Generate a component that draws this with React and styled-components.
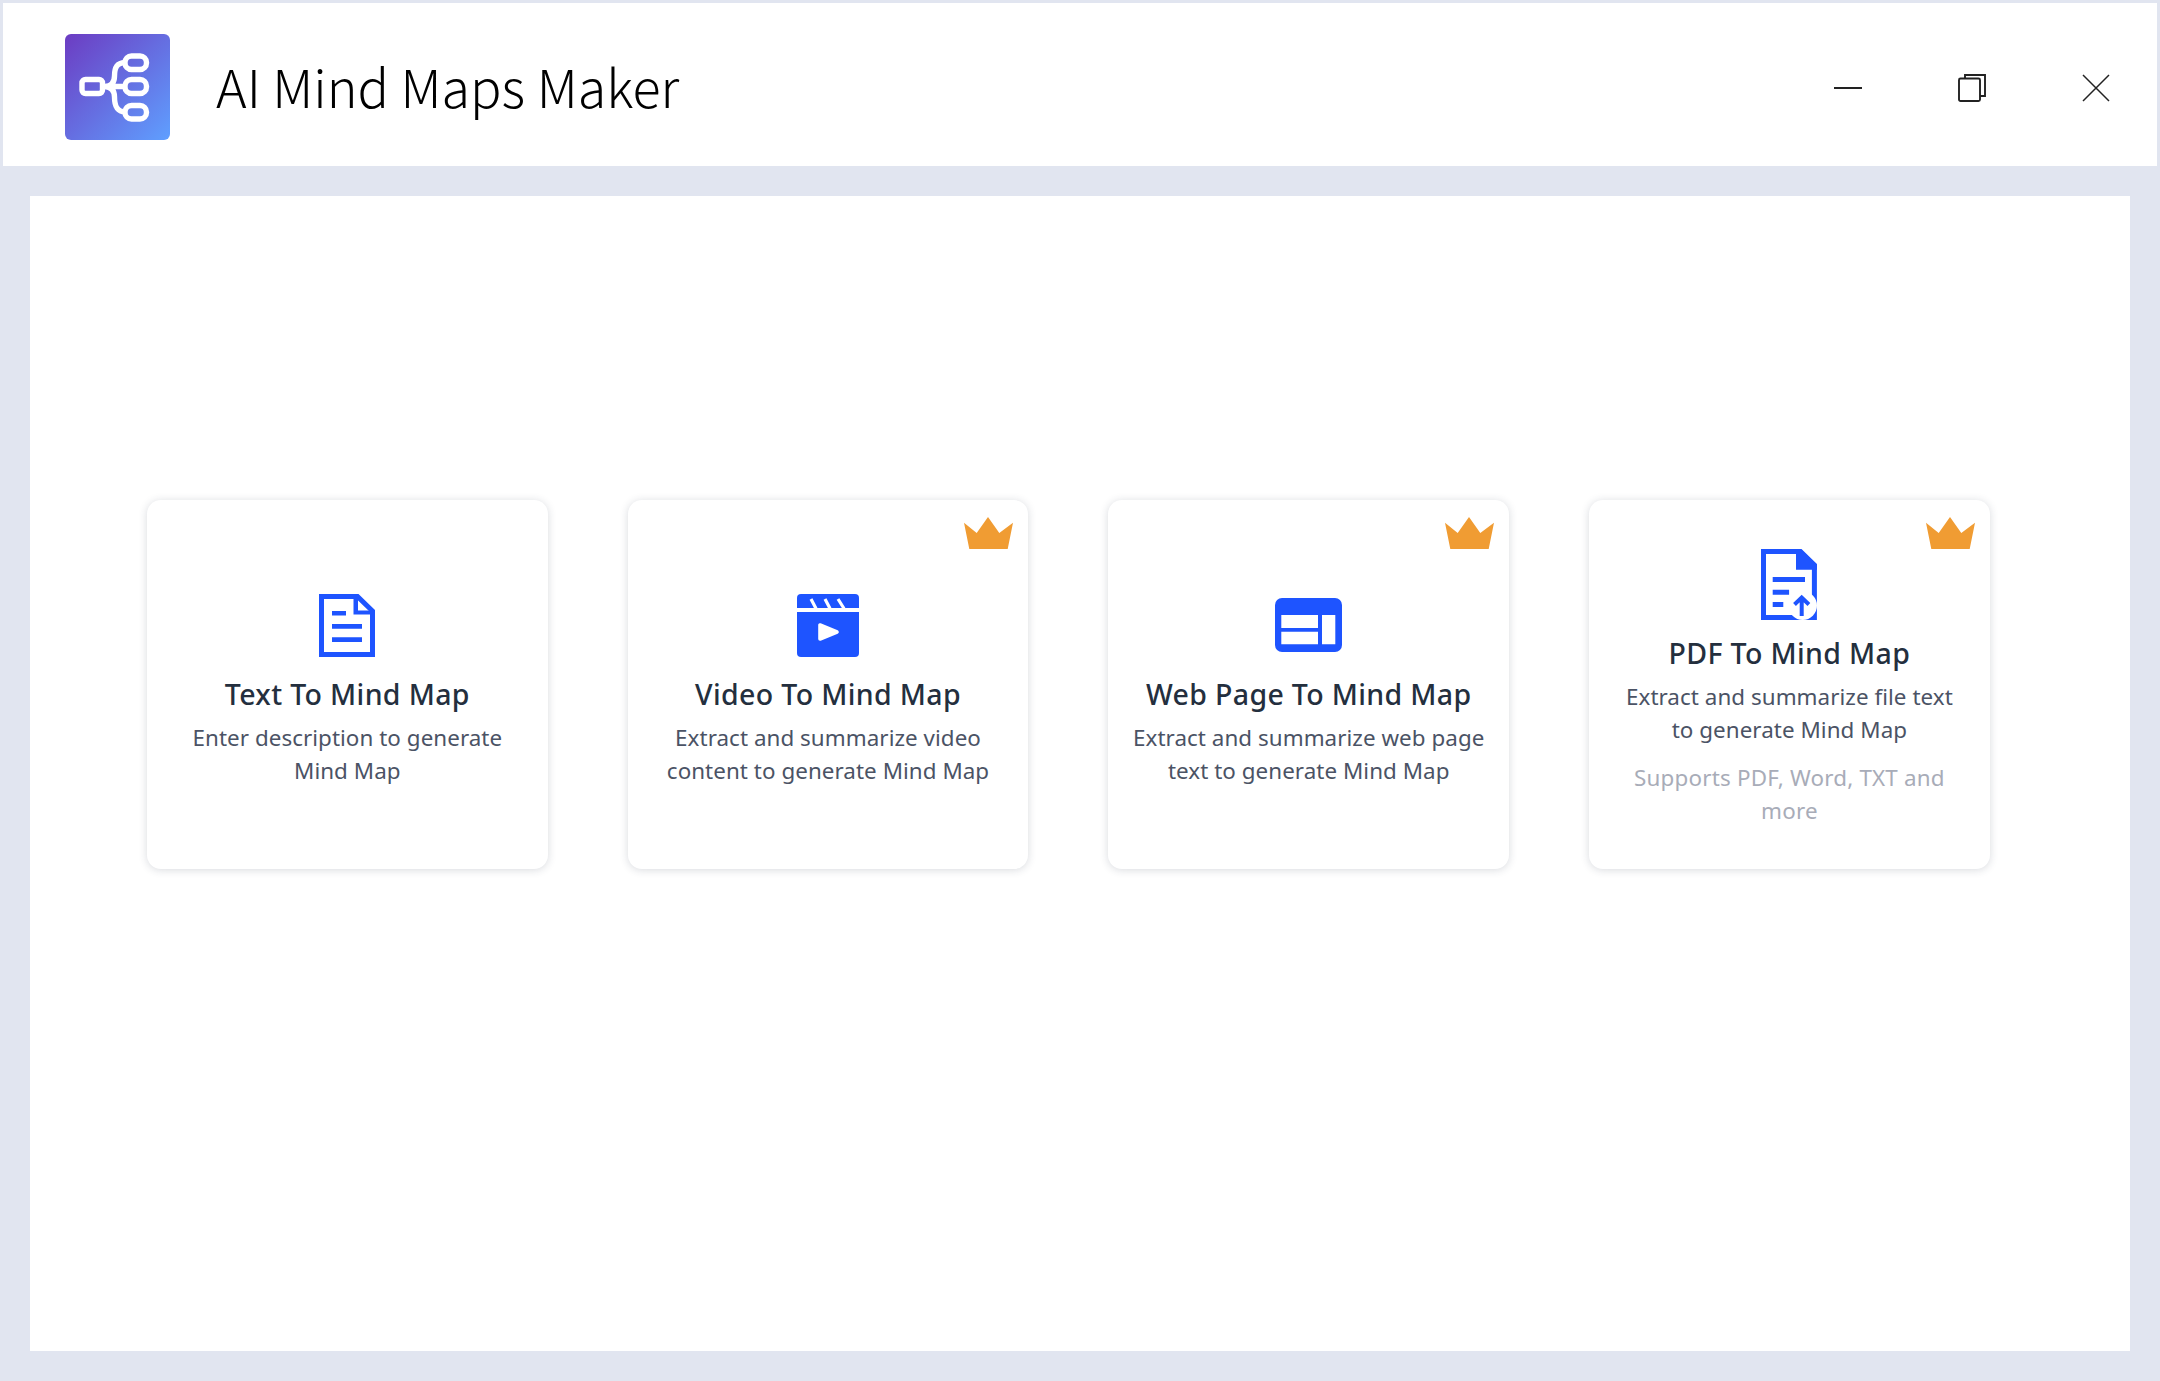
import React from "react";
import styled, { createGlobalStyle } from "styled-components";

const Global = createGlobalStyle`
  html, body { margin: 0; padding: 0; background: #e1e5f0; }
  #root { width: 2160px; height: 1381px; }
  * { box-sizing: border-box; }
`;

const Page = styled.div`
  width: 2160px;
  height: 1381px;
  padding: 3px 3px 30px;
  display: flex;
  flex-direction: column;
  background: #e1e5f0;
`;

const TitleBar = styled.header`
  height: 163px;
  flex: none;
  background: #fff;
  display: flex;
  align-items: center;
  padding: 5px 47px 0 62px;
`;

const Logo = styled.svg`
  width: 105px;
  height: 106px;
  display: block;
  flex: none;
`;

const AppName = styled.h1`
  margin: 0 0 1px 46px;
  font-family: "Noto Sans CJK SC", "Noto Sans", sans-serif;
  font-weight: 300;
  font-size: 52.1px;
  line-height: 1;
  color: #000;
  flex: 1;
`;

const Controls = styled.div`
  display: flex;
  align-items: center;
  gap: 96px;
  margin-top: 2px;
`;

const WinIcon = styled.svg`
  width: 28px;
  height: 28px;
  display: block;
  fill: none;
  stroke: #222;
`;

const Main = styled.main`
  flex: 1;
  margin: 30px 27px 0;
  background: #fff;
  padding: 304px 140px 0 117px;
`;

const CardRow = styled.div`
  display: grid;
  grid-template-columns: repeat(4, 400.7px);
  gap: 80px;
`;

const Card = styled.section`
  position: relative;
  height: 369px;
  background: #fff;
  border-radius: 14px;
  box-shadow: 0 1px 8px rgba(40, 50, 70, 0.18);
  display: flex;
  flex-direction: column;
  align-items: center;
  justify-content: center;
  text-align: center;
`;

const Crown = styled.svg`
  position: absolute;
  top: 17px;
  right: 15px;
  width: 49px;
  height: 32px;
  fill: #f09c33;
`;

const IconBox = styled.div`
  height: 85px;
  margin-bottom: 7px;
  display: flex;
  align-items: center;
  justify-content: center;
`;

const CardIcon = styled.svg`
  display: block;
  overflow: visible;
`;

const CardTitle = styled.h2`
  margin: 0;
  font-family: "Noto Sans", sans-serif;
  font-weight: 500;
  font-size: 28.5px;
  letter-spacing: 0.35px;
  line-height: 38px;
  color: #242f3e;
  white-space: nowrap;
`;

const CardText = styled.p`
  margin: ${(p) => (p.$muted ? "15px" : "8px")} 0 0;
  font-family: "Noto Sans", sans-serif;
  font-weight: 400;
  font-size: 22.4px;
  letter-spacing: ${(p) => (p.$muted ? "0.2px" : "0.05px")};
  line-height: 33px;
  color: ${(p) => (p.$muted ? "#a8acb8" : "#4b5365")};
  white-space: pre;
`;

const BLUE = "#1e54ff";

const DocIcon = () => (
  <CardIcon width="56" height="63" viewBox="0 0 56 63">
    <path d="M2.5 2.5H38.5L53.5 17V60.5H2.5Z" fill="none" stroke={BLUE} strokeWidth="5" />
    <path d="M34.5 1V20.5H55V16.5H39V1Z" fill={BLUE} />
    <path d="M13 17h14v4.6H13zM13 30h30v4.8H13zM13 43.3h30v4.8H13z" fill={BLUE} />
  </CardIcon>
);

const VideoIcon = () => (
  <CardIcon width="62" height="63" viewBox="0 0 62 63">
    <path d="M4 0H58A4 4 0 0 1 62 4V14H0V4A4 4 0 0 1 4 0Z" fill={BLUE} />
    <path d="M0 18H62V59A4 4 0 0 1 58 63H4A4 4 0 0 1 0 59Z" fill={BLUE} />
    <path d="M14 5L19 14.5M28 5L33 14.5M41 5L47 14.5" stroke="#fff" strokeWidth="3.2" fill="none" />
    <path d="M23 31V45L40 38Z" fill="#fff" stroke="#fff" strokeWidth="3.6" strokeLinejoin="round" />
  </CardIcon>
);

const WebIcon = () => (
  <CardIcon width="67" height="54" viewBox="0 0 67 54">
    <rect width="67" height="54" rx="7" fill={BLUE} />
    <path d="M6.3 17H43V30H6.3zM6.3 33.7H43V46.3H6.3zM47 17H60.3V46.3H47z" fill="#fff" />
  </CardIcon>
);

const PdfIcon = () => (
  <CardIcon width="56" height="71" viewBox="0 0 56 71">
    <path d="M2.5 2.5H39.5L53.4 16V68.5H2.5Z" fill="none" stroke={BLUE} strokeWidth="5" />
    <path d="M35 1H40.5L56 15.5V20.8H35Z" fill={BLUE} />
    <path d="M11.7 28h32.3v5H11.7zM11.7 40.7h16.4v5H11.7zM11.7 53h10.6v5H11.7z" fill={BLUE} />
    <circle cx="41.7" cy="56.6" r="14.3" fill="#fff" />
    <path d="M40.7 67V50M33.5 55.5L40.7 48.6L47.9 55.5" fill="none" stroke={BLUE} strokeWidth="4" />
  </CardIcon>
);

const cards = [
  { key: "text", Icon: DocIcon, title: "Text To Mind Map", text: "Enter description to generate\nMind Map" },
  { key: "video", Icon: VideoIcon, crown: true, title: "Video To Mind Map", text: "Extract and summarize video\ncontent to generate Mind Map" },
  { key: "web", Icon: WebIcon, crown: true, title: "Web Page To Mind Map", text: "Extract and summarize web page\ntext to generate Mind Map" },
  { key: "pdf", Icon: PdfIcon, crown: true, title: "PDF To Mind Map", text: "Extract and summarize file text\nto generate Mind Map", note: "Supports PDF, Word, TXT and\nmore" },
];

export default function App() {
  return (
    <Page>
      <Global />
      <TitleBar>
        <Logo viewBox="0 0 105 106">
          <defs>
            <linearGradient id="logoFill" x1="0" y1="0" x2="1" y2="1">
              <stop offset="0" stopColor="#6c3cc2" />
              <stop offset="1" stopColor="#5f9fff" />
            </linearGradient>
          </defs>
          <rect width="105" height="106" rx="6" fill="url(#logoFill)" />
          <g fill="none" stroke="#fff" strokeWidth="5.4">
            <rect x="17" y="45.5" width="20.5" height="14" rx="3.5" />
            <rect x="60" y="22" width="21.5" height="13.5" rx="6.5" />
            <rect x="60" y="45.5" width="21.5" height="14" rx="6.5" />
            <rect x="60" y="71.5" width="21.5" height="13.5" rx="6.5" />
            <path d="M38 52.5H60M40 52.5C47 52 49.5 48 49.5 42C49.5 33 52 29 60 28.5M40 52.5C47 53 49.5 57 49.5 63C49.5 72 52 77.5 60 78" />
          </g>
        </Logo>
        <AppName>AI Mind Maps Maker</AppName>
        <Controls>
          <WinIcon viewBox="0 0 28 28" strokeWidth="2">
            <path d="M0 14H28" />
          </WinIcon>
          <WinIcon viewBox="0 0 28 28" strokeWidth="1.9">
            <rect x="1" y="4.5" width="21" height="22.5" rx="1.5" />
            <path d="M7 4.5V1H27V22H22" />
          </WinIcon>
          <WinIcon viewBox="0 0 28 28" strokeWidth="1.5">
            <path d="M1 1L27 27M27 1L1 27" />
          </WinIcon>
        </Controls>
      </TitleBar>
      <Main>
        <CardRow>
          {cards.map(({ key, Icon, crown, title, text, note }) => (
            <Card key={key}>
              {crown && (
                <Crown viewBox="0 0 49 32">
                  <path d="M0 5.7L12.7 16L24 0L35.3 16L49 5.7L43.7 32H5.3Z" />
                </Crown>
              )}
              <IconBox>
                <Icon />
              </IconBox>
              <CardTitle>{title}</CardTitle>
              <CardText>{text}</CardText>
              {note && <CardText $muted>{note}</CardText>}
            </Card>
          ))}
        </CardRow>
      </Main>
    </Page>
  );
}
